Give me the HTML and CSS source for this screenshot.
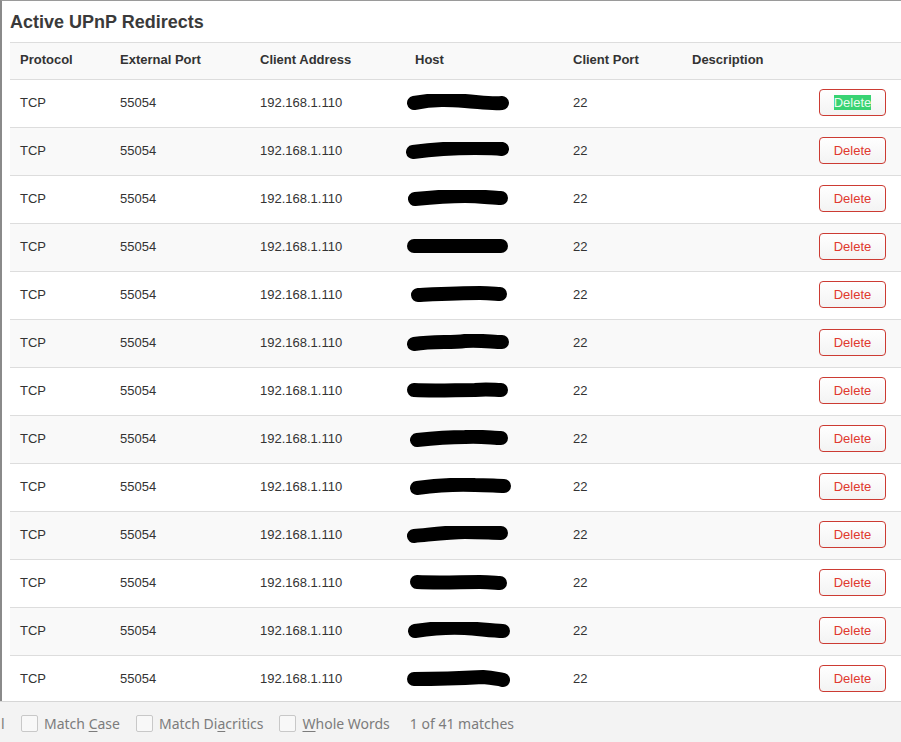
FILE: index.html
```html
<!DOCTYPE html>
<html>
<head>
<meta charset="utf-8">
<link rel="stylesheet" href="styles.css">
</head>
<body>
<div class="page">
  <h2 class="title">Active UPnP Redirects</h2>
  <table class="grid">
    <colgroup>
      <col class="c-proto"><col class="c-ext"><col class="c-addr"><col class="c-host"><col class="c-port"><col class="c-desc"><col class="c-act">
    </colgroup>
    <thead>
      <tr><th>Protocol</th><th>External Port</th><th>Client Address</th><th>Host</th><th>Client Port</th><th>Description</th><th></th></tr>
    </thead>
    <tbody id="rows"></tbody>
  </table>
</div>
<div class="findbar">
  <span class="cut">l</span>
  <label class="opt"><span class="box"></span><span>Match <u>C</u>ase</span></label>
  <label class="opt"><span class="box"></span><span>Match Di<u>a</u>critics</span></label>
  <label class="opt"><span class="box"></span><span><u>W</u>hole Words</span></label>
  <span class="count">1 of 41 matches</span>
</div>
<script src="app.js"></script>
</body>
</html>
```
FILE: app.js
```js
var blobs = [
  "M9 9 C30 5 45 6 60 7 C75 8 85 10 97 9",
  "M8 10 C30 7 50 6 70 6 C80 6 90 6 97 7",
  "M10 9 C30 7 45 6 60 6 C75 6 88 8 96 8",
  "M9 8 C30 8 60 8 96 8",
  "M13 9 C35 8 55 7 75 7 C85 7 92 8 95 8",
  "M9 10 C30 7 45 9 60 7 C75 6 88 8 97 8",
  "M9 8 C30 9 50 8 70 8 C82 7 90 8 96 8",
  "M12 10 C30 8 45 7 60 7 C75 6 88 8 96 8",
  "M12 10 C35 7 50 6 70 7 C82 7 92 8 99 8",
  "M9 10 C30 8 45 6 60 6 C75 6 88 7 96 7",
  "M12 8 C35 9 55 8 75 8 C85 8 92 9 95 9",
  "M10 9 C30 6 45 5 60 6 C75 7 88 9 98 9",
  "M9 9 C35 9 60 8 78 7 C88 8 95 9 98 10"
];
var tb = document.getElementById("rows");
blobs.forEach(function (d, i) {
  var tr = document.createElement("tr");
  var btn = i === 0 ? '<button class="del"><span class="hit">Delete</span></button>' : '<button class="del">Delete</button>';
  tr.innerHTML = '<td>TCP</td><td>55054</td><td>192.168.1.110</td>' +
    '<td class="host"><svg width="108" height="18" viewBox="0 0 108 18"><path d="' + d + '" fill="none" stroke="#000" stroke-width="14" stroke-linecap="round"/></svg></td>' +
    '<td>22</td><td></td><td class="act">' + btn + '</td>';
  tb.appendChild(tr);
});
```
FILE: styles.css
```css
html, body {
  margin: 0;
  padding: 0;
  background: #fff;
  overflow: hidden;
}
body {
  width: 901px;
  height: 742px;
  font-family: "Liberation Sans", Arial, sans-serif;
  color: #333;
}
.page {
  height: 701px;
  border-left: 2px solid #8a8a8a;
  border-top: 1px solid #9a9a9a;
  box-sizing: border-box;
  overflow: hidden;
}
.title {
  margin: 0;
  padding: 10px 0 0 8px;
  height: 31px;
  box-sizing: border-box;
  font-size: 18px;
  font-weight: bold;
  line-height: 22px;
  color: #3a3a3a;
}
.grid {
  margin-left: 8px;
  margin-top: 10px;
  width: 891px;
  border-collapse: collapse;
  table-layout: fixed;
  font-size: 13px;
}
.c-proto { width: 100px; }
.c-ext { width: 140px; }
.c-addr { width: 155px; }
.c-host { width: 158px; }
.c-port { width: 119px; }
.c-desc { width: auto; }
.c-act { width: 100px; }
.grid th {
  text-align: left;
  font-weight: bold;
  height: 37px;
  padding: 0 10px 4px;
  box-sizing: border-box;
  background: #f9f9f9;
  border-top: 1px solid #ddd;
  border-bottom: 1px solid #ddd;
  color: #333;
}
.grid td {
  height: 45px;
  padding: 0 10px 2px;
  border-bottom: 1px solid #ddd;
  color: #333;
  vertical-align: middle;
}
.grid tbody tr:nth-child(even) td { background: #f9f9f9; }
.grid td.host {
  padding: 0 0 2px 0;
}
.grid td.host svg {
  display: block;
}
.grid td.act {
  text-align: right;
  padding-right: 15px;
}
.del {
  font-family: "Liberation Sans", Arial, sans-serif;
  font-size: 13px;
  color: #e0392f;
  background: linear-gradient(#ffffff, #f3f3f3);
  border: 1px solid #cc3b33;
  border-radius: 4px;
  width: 67px;
  height: 27px;
  padding: 0;
}
.hit {
  background: #38d373;
  color: #e8fbef;
}
.findbar {
  height: 41px;
  background: #f3f3f3;
  border-top: 1px solid #d6d6d6;
  box-sizing: border-box;
  display: flex;
  align-items: center;
  font-family: "Noto Sans", "DejaVu Sans", sans-serif;
  font-size: 14px;
  color: #7c7c7c;
  padding-left: 1px;
  padding-top: 2px;
}
.cut { width: 20px; }
.opt {
  display: flex;
  align-items: center;
  margin-right: 16px;
}
.box {
  width: 15px;
  height: 15px;
  border: 1px solid #c8c8c8;
  border-radius: 2px;
  background: #f8f8f8;
  margin-right: 6px;
}
u { text-decoration-thickness: 1px; text-underline-offset: 2px; }
.count { margin-left: 4px; }
```
